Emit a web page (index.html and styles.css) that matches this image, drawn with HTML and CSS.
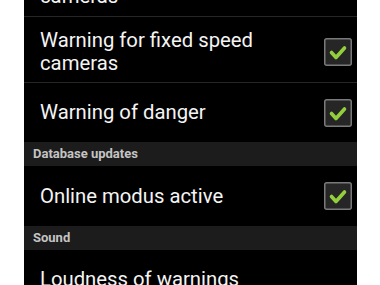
FILE: index.html
```html
<!DOCTYPE html>
<html>
<head>
<meta charset="utf-8">
<link rel="stylesheet" href="styles.css">
</head>
<body>
<div class="screen">
  <div class="panel">
    <div class="list">
      <div class="row row-first">
        <div class="title">cameras</div>
      </div>
      <div class="row row-two">
        <div class="title">Warning for fixed speed<br>cameras</div>
        <svg class="check" viewBox="0 0 28 28" width="28" height="28"><rect x="0.75" y="0.75" width="26.5" height="26.5" rx="2" fill="#262626" stroke="#7a7a7a" stroke-width="1.5"/><polyline points="7.5,14.5 12,19.5 20.5,10" fill="none" stroke="#93cf3c" stroke-width="3.6" stroke-linecap="round" stroke-linejoin="round"/></svg>
      </div>
      <div class="row row-one">
        <div class="title">Warning of danger</div>
        <svg class="check" viewBox="0 0 28 28" width="28" height="28"><rect x="0.75" y="0.75" width="26.5" height="26.5" rx="2" fill="#262626" stroke="#7a7a7a" stroke-width="1.5"/><polyline points="7.5,14.5 12,19.5 20.5,10" fill="none" stroke="#93cf3c" stroke-width="3.6" stroke-linecap="round" stroke-linejoin="round"/></svg>
      </div>
      <div class="header">Database updates</div>
      <div class="row row-tall">
        <div class="title">Online modus active</div>
        <svg class="check" viewBox="0 0 28 28" width="28" height="28"><rect x="0.75" y="0.75" width="26.5" height="26.5" rx="2" fill="#262626" stroke="#7a7a7a" stroke-width="1.5"/><polyline points="7.5,14.5 12,19.5 20.5,10" fill="none" stroke="#93cf3c" stroke-width="3.6" stroke-linecap="round" stroke-linejoin="round"/></svg>
      </div>
      <div class="header">Sound</div>
      <div class="row row-one">
        <div class="title">Loudness of warnings</div>
      </div>
    </div>
  </div>
</div>
</body>
</html>
```
FILE: styles.css
```css
html, body {
  margin: 0;
  padding: 0;
  background: #ffffff;
}
.screen {
  width: 380px;
  height: 285px;
  overflow: hidden;
}
.panel {
  margin-left: 24px;
  width: 333px;
  height: 285px;
  background: #000000;
  overflow: hidden;
  font-family: Roboto, "Liberation Sans", sans-serif;
}
.list {
  margin-top: -15px;
}
.row {
  display: flex;
  align-items: center;
  justify-content: space-between;
  padding: 0 5px 0 16px;
  box-sizing: border-box;
}
.title {
  color: #f4f4f4;
  font-size: 20.3px;
  line-height: 23px;
}
.row-first {
  padding-bottom: 8px;
  border-bottom: 1px solid #262626;
}
.row-two {
  height: 66px;
  padding-top: 4px;
  border-bottom: 1px solid #262626;
}
.row-one {
  height: 59px;
}
.row-tall {
  height: 60px;
}
.check {
  display: block;
  flex: none;
}
.header {
  height: 24px;
  line-height: 24px;
  background: #1c1c1c;
  color: #c4c4c4;
  font-size: 13px;
  font-weight: bold;
  padding-left: 9px;
}
```
